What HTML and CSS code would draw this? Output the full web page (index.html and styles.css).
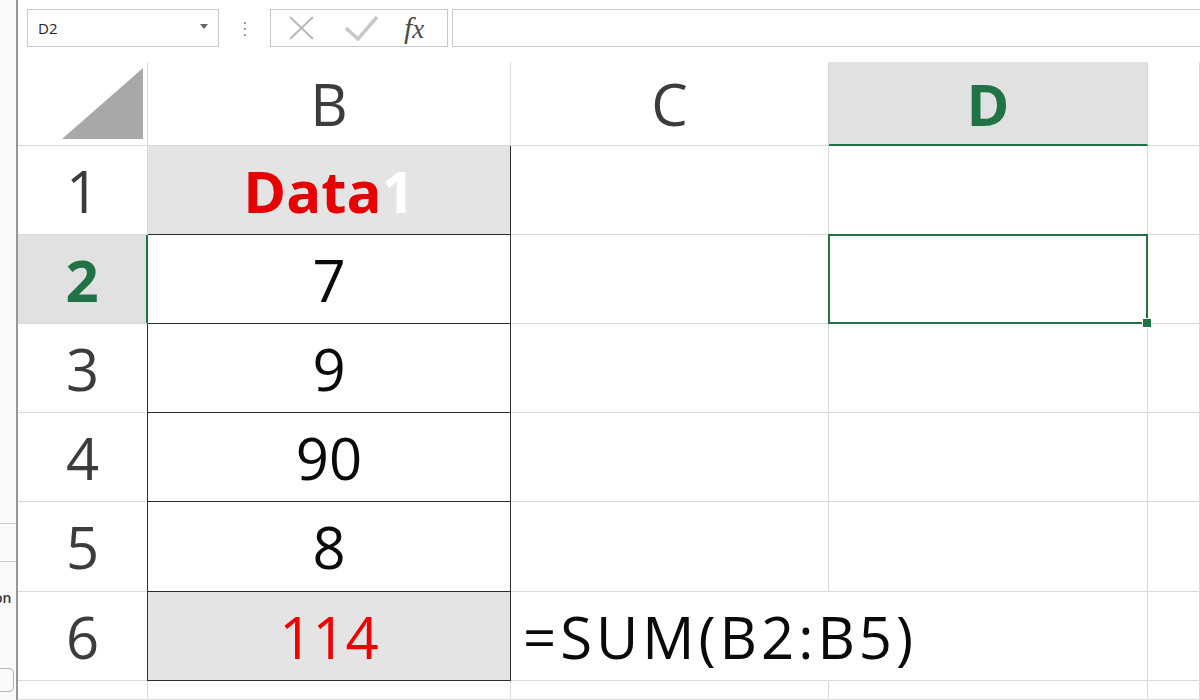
FILE: index.html
```html
<!DOCTYPE html>
<html lang="en">
  <head>
    <meta charset="UTF-8" />
    <meta name="viewport" content="width=device-width, initial-scale=1.0" />
    <title>SUM</title>
    <link rel="stylesheet" href="styles.css">
  </head>

  <body>
    <div class="app">
      <!-- 左侧窄条 -->
      <div class="side">
        <div class="side-block"></div>
        <div class="side-text">on</div>
        <div class="side-btn"></div>
      </div>

      <div class="main">
        <!-- 编辑栏 -->
        <div class="fbar">
          <div class="namebox">
            <span>D2</span>
            <i class="caret"></i>
          </div>
          <div class="dots"><i></i><i></i><i></i></div>
          <div class="fxbox">
            <svg class="ico-x" width="28" height="24" viewBox="0 0 28 24">
              <path d="M3 1 L26 23 M26 1 L3 23" stroke="#b8b8b8" stroke-width="2" fill="none" />
            </svg>
            <svg class="ico-ok" width="34" height="26" viewBox="0 0 34 26">
              <path d="M1 13 L13 24 L32 2" stroke="#c8c8c8" stroke-width="3.5" fill="none" />
            </svg>
            <span class="fx">f<span class="fx-x">x</span></span>
          </div>
          <div class="finput"></div>
        </div>

        <!-- 表格 -->
        <div class="sheet">
          <div class="c corner"><div class="tri"></div></div>
          <div class="c h">B</div>
          <div class="c h">C</div>
          <div class="c h sel">D</div>
          <div class="c h"></div>

          <div class="c rh">1</div>
          <div class="c b b1 grey"><b class="red">Data</b><b class="white">1</b></div>
          <div class="c"></div>
          <div class="c"></div>
          <div class="c"></div>

          <div class="c rh sel">2</div>
          <div class="c b b2">7</div>
          <div class="c"></div>
          <div class="c active"></div>
          <div class="c"></div>

          <div class="c rh">3</div>
          <div class="c b">9</div>
          <div class="c"></div>
          <div class="c"></div>
          <div class="c"></div>

          <div class="c rh">4</div>
          <div class="c b">90</div>
          <div class="c"></div>
          <div class="c"></div>
          <div class="c"></div>

          <div class="c rh">5</div>
          <div class="c b">8</div>
          <div class="c"></div>
          <div class="c"></div>
          <div class="c"></div>

          <div class="c rh">6</div>
          <div class="c b grey red-num">114</div>
          <div class="c formula">=SUM(B2:B5)</div>
          <div class="c"></div>
          <div class="c"></div>

          <div class="c rh"></div>
          <div class="c"></div>
          <div class="c"></div>
          <div class="c"></div>
          <div class="c"></div>
        </div>
      </div>
    </div>
  </body>
</html>
```

FILE: styles.css
```css
* {
  margin: 0;
  padding: 0;
  box-sizing: border-box;
}

body {
  width: 1200px;
  height: 700px;
  overflow: hidden;
  background: #fff;
  font-family: "Open Sans", "Noto Sans", sans-serif;
}

.app {
  display: flex;
  height: 700px;
}

/* 左侧窄条 */
.side {
  width: 18px;
  flex-shrink: 0;
  background: #fafafa;
  border-right: 2px solid #8f9b94;
  display: flex;
  flex-direction: column;
  overflow: hidden;
}
.side-block {
  margin-top: 523px;
  height: 39px;
  border-top: 1px solid #cdcdcd;
  border-bottom: 1px solid #cdcdcd;
}
.side-text {
  margin: 27px 0 0 -6px;
  font-size: 14px;
  line-height: 18px;
  color: #333;
  font-weight: 600;
}
.side-btn {
  margin: 61px 0 0 -8px;
  width: 22px;
  height: 24px;
  border: 1px solid #b5b5b5;
  border-radius: 4px;
}

.main {
  flex: 1;
  min-width: 0;
  display: flex;
  flex-direction: column;
}

/* 编辑栏 */
.fbar {
  height: 62px;
  flex-shrink: 0;
  display: flex;
  align-items: flex-start;
  padding: 9px 0 0 9px;
}
.namebox {
  width: 192px;
  height: 38px;
  border: 1px solid #c8c8c8;
  display: flex;
  align-items: center;
  justify-content: space-between;
  padding: 0 10px 0 10px;
  font-size: 15px;
  color: #222;
}
.caret {
  width: 0;
  height: 0;
  border-left: 4px solid transparent;
  border-right: 4px solid transparent;
  border-top: 5px solid #666;
  margin-top: -3px;
}
.dots {
  display: flex;
  flex-direction: column;
  gap: 4px;
  margin: 13px 24px 0 25px;
}
.dots i {
  width: 2px;
  height: 2px;
  background: #999;
}
.fxbox {
  width: 178px;
  height: 38px;
  border: 1px solid #c8c8c8;
  display: flex;
  align-items: center;
  padding-left: 16px;
}
.ico-ok {
  margin-left: 30px;
}
.fx {
  margin-left: 25px;
  font-family: "Liberation Serif", serif;
  font-style: italic;
  font-size: 30px;
  color: #4a4a4a;
  line-height: 1;
}
.fx-x {
  font-size: 27px;
}
.finput {
  flex: 1;
  height: 38px;
  margin-left: 4px;
  border: 1px solid #c8c8c8;
  border-right: 0;
}

/* 表格 */
.sheet {
  flex: 1;
  display: grid;
  grid-template-columns: 130px 363px 318px 319px 1fr;
  grid-template-rows: 84px 89px 89px 89px 89px 90px 89px 1fr;
}
.c {
  border-right: 1px solid #dadada;
  border-bottom: 1px solid #dadada;
  display: flex;
  align-items: center;
  justify-content: center;
  font-size: 58px;
  color: #0a0a0a;
  white-space: nowrap;
}
.h,
.rh {
  color: #3c3c3c;
}
.h.sel {
  background: #e1e1e1;
  border-bottom: 2px solid #217346;
  color: #217346;
  font-weight: 700;
}
.rh.sel {
  background: #e1e1e1;
  border-right: 2px solid #217346;
  color: #217346;
  font-weight: 700;
}
.corner {
  align-items: flex-end;
  justify-content: flex-end;
  padding: 0 4px 6px 0;
}
.tri {
  width: 81px;
  height: 71px;
  background: #a8a8a8;
  clip-path: polygon(100% 0, 100% 100%, 0 100%);
}

/* B列的边框 */
.b {
  border-right-color: #2e2e2e;
  border-bottom-color: #2e2e2e;
  box-shadow: -1px 0 0 #2e2e2e;
}
.b1 {
  box-shadow: none;
}
.b2 {
  box-shadow: none;
}
.grey {
  background: #e4e4e4;
}
.red {
  color: #e60000;
}
.white {
  color: #fff;
}
.red-num {
  color: #f20000;
}
.formula {
  justify-content: flex-start;
  padding-left: 12px;
  border-right-color: transparent;
  letter-spacing: 4px;
}

/* 选中的单元格 */
.active {
  position: relative;
}
.active::after {
  content: "";
  position: absolute;
  left: -1px;
  top: -1px;
  right: -1px;
  bottom: -1px;
  border: 2px solid #217346;
}
.active::before {
  content: "";
  position: absolute;
  right: -5px;
  bottom: -5px;
  width: 8px;
  height: 8px;
  background: #217346;
  border: 1px solid #fff;
  z-index: 1;
}
```
